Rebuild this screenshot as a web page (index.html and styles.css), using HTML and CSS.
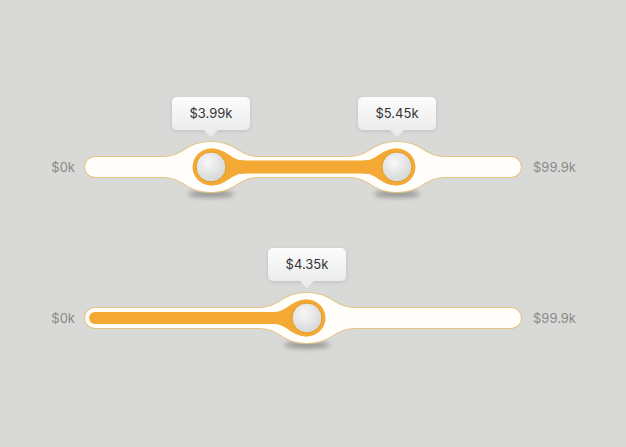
FILE: index.html
```html
<!DOCTYPE html>
<html lang="en">
<head>
    <meta charset="UTF-8">
    <title>Range sliders</title>
    <link rel="stylesheet" href="styles.css">
</head>
<body>
    <div class="sliders">

        <!-- range slider, two handles -->
        <div class="row">
            <span class="limit min">$0k</span>
            <div class="track">
                <svg width="438" height="80" viewBox="0 0 438 80">
                    <defs>
                        <radialGradient id="knob1" cx="0.4" cy="0.35" r="0.7">
                            <stop offset="0" stop-color="#f8f8f8"/>
                            <stop offset="1" stop-color="#d4d4d4"/>
                        </radialGradient>
                        <filter id="blur1" x="-50%" y="-200%" width="200%" height="500%">
                            <feGaussianBlur stdDeviation="2.5"/>
                        </filter>
                    </defs>
                    <!-- shadows under handles -->
                    <ellipse cx="127" cy="67" rx="23" ry="3.5" fill="rgba(0,0,0,.32)" filter="url(#blur1)"/>
                    <ellipse cx="313" cy="67" rx="23" ry="3.5" fill="rgba(0,0,0,.32)" filter="url(#blur1)"/>
                    <!-- outline pass -->
                    <g fill="#fff" stroke="#e6c583" stroke-width="2">
                        <rect x="1" y="30" width="436" height="20" rx="10"/>
                        <path d="M79 30 C100 30 102 15 127 15 C152 15 154 30 175 30 L175 50 C154 50 152 65 127 65 C102 65 100 50 79 50 Z"/>
                        <path d="M265 30 C286 30 288 15 313 15 C338 15 340 30 361 30 L361 50 C340 50 338 65 313 65 C288 65 286 50 265 50 Z"/>
                    </g>
                    <!-- fill pass hides inner seams -->
                    <g fill="#fffefb">
                        <rect x="1" y="30" width="436" height="20" rx="10"/>
                        <path d="M79 30 C100 30 102 15 127 15 C152 15 154 30 175 30 L175 50 C154 50 152 65 127 65 C102 65 100 50 79 50 Z"/>
                        <path d="M265 30 C286 30 288 15 313 15 C338 15 340 30 361 30 L361 50 C340 50 338 65 313 65 C288 65 286 50 265 50 Z"/>
                    </g>
                    <!-- selected range -->
                    <g fill="#f5a935">
                        <rect x="127" y="33.5" width="186" height="13"/>
                        <path d="M127 21.5 C143 21.5 147 33.5 160 33.5 L160 46.5 C147 46.5 143 58.5 127 58.5 Z"/>
                        <path d="M313 21.5 C297 21.5 293 33.5 280 33.5 L280 46.5 C293 46.5 297 58.5 313 58.5 Z"/>
                        <circle cx="127" cy="40" r="18.5"/>
                        <circle cx="313" cy="40" r="18.5"/>
                    </g>
                    <circle cx="127" cy="40" r="15" fill="url(#knob1)" stroke="#e39821" stroke-width="1"/>
                    <circle cx="313" cy="40" r="15" fill="url(#knob1)" stroke="#e39821" stroke-width="1"/>
                </svg>
                <div class="tip" style="left: 88px">$3.99k</div>
                <div class="tip" style="left: 274px">$5.45k</div>
            </div>
            <span class="limit max">$99.9k</span>
        </div>

        <!-- single value slider -->
        <div class="row">
            <span class="limit min">$0k</span>
            <div class="track">
                <svg width="438" height="80" viewBox="0 0 438 80">
                    <defs>
                        <radialGradient id="knob2" cx="0.4" cy="0.35" r="0.7">
                            <stop offset="0" stop-color="#f8f8f8"/>
                            <stop offset="1" stop-color="#d4d4d4"/>
                        </radialGradient>
                        <filter id="blur2" x="-50%" y="-200%" width="200%" height="500%">
                            <feGaussianBlur stdDeviation="2.5"/>
                        </filter>
                    </defs>
                    <ellipse cx="223" cy="67" rx="23" ry="3.5" fill="rgba(0,0,0,.32)" filter="url(#blur2)"/>
                    <g fill="#fff" stroke="#e6c583" stroke-width="2">
                        <rect x="1" y="30" width="436" height="20" rx="10"/>
                        <path d="M175 30 C196 30 198 15 223 15 C248 15 250 30 271 30 L271 50 C250 50 248 65 223 65 C198 65 196 50 175 50 Z"/>
                    </g>
                    <g fill="#fffefb">
                        <rect x="1" y="30" width="436" height="20" rx="10"/>
                        <path d="M175 30 C196 30 198 15 223 15 C248 15 250 30 271 30 L271 50 C250 50 248 65 223 65 C198 65 196 50 175 50 Z"/>
                    </g>
                    <g fill="#f5a935">
                        <rect x="5" y="34" width="220" height="12" rx="6"/>
                        <path d="M223 21.5 C207 21.5 203 34 190 34 L190 46 C203 46 207 58.5 223 58.5 Z"/>
                        <circle cx="223" cy="40" r="18.5"/>
                    </g>
                    <circle cx="223" cy="40" r="15" fill="url(#knob2)" stroke="#e39821" stroke-width="1"/>
                </svg>
                <div class="tip" style="left: 184px">$4.35k</div>
            </div>
            <span class="limit max">$99.9k</span>
        </div>

    </div>
</body>
</html>
```

FILE: styles.css
```css
*{
    margin: 0;
    padding: 0;
    box-sizing: border-box;
}
body{
    background-color: #d9d9d7;
    font-family: Inter, "Liberation Sans", sans-serif;
}
.sliders{
    display: flex;
    flex-direction: column;
    gap: 71px;
    padding: 127px 0 0 30px;
}
.row{
    display: flex;
    align-items: center;
}
.limit{
    font-size: 13px;
    color: #8a8a88;
}
.min{
    width: 45px;
    text-align: right;
    margin-right: 9px;
}
.max{
    margin-left: 11px;
}
.track{
    position: relative;
    width: 438px;
    height: 80px;
}
.track svg{
    display: block;
}
.tip{
    position: absolute;
    top: -30px;
    width: 78px;
    height: 33px;
    line-height: 33px;
    text-align: center;
    font-size: 13px;
    color: #333;
    background: linear-gradient(#fcfcfc, #ececec);
    border-radius: 5px;
    box-shadow: 0 1px 4px rgba(0,0,0,.12);
}
.tip::after{
    content: "";
    position: absolute;
    left: 34px;
    bottom: -5px;
    width: 10px;
    height: 10px;
    background-color: #ececec;
    transform: rotate(45deg);
}
```
